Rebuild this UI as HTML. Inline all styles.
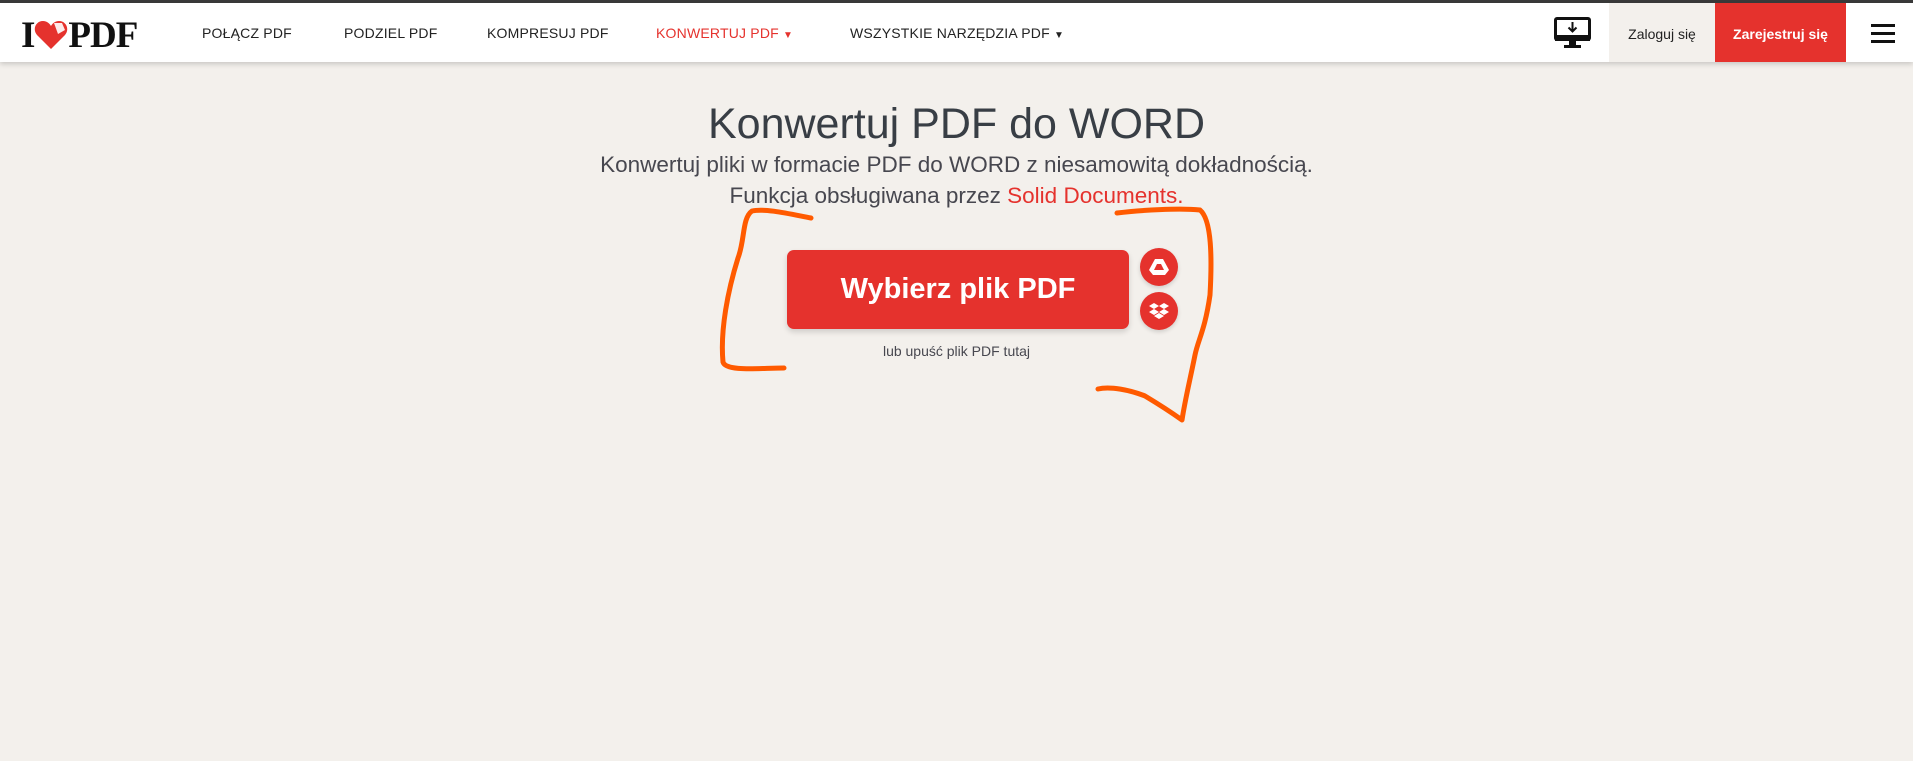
<!DOCTYPE html>
<html><head><meta charset="utf-8"><style>
*{margin:0;padding:0;box-sizing:border-box}
body{width:1913px;height:761px;background:#f3f0ec;font-family:"Liberation Sans",sans-serif;position:relative;overflow:hidden;color:#383e45}
.top{position:absolute;left:0;top:0;width:1913px;height:3px;background:#3a3a3a}
.hdr{position:absolute;left:0;top:3px;width:1913px;height:59px;background:#fff;box-shadow:0 2px 5px rgba(0,0,0,.18)}
.nav{position:absolute;top:33px;font-size:14px;color:#222;transform:translateY(-50%);letter-spacing:.2px}
.logo{position:absolute;left:21px;top:14px;font-family:"Liberation Serif",serif;font-weight:bold;font-size:37px;color:#111;letter-spacing:-1px}
.abs{position:absolute}
</style></head><body>
<div class="top"></div>
<div class="hdr"></div>
<div class="logo">I<span style="display:inline-block;width:34px"></span>PDF</div>
<svg class="abs" style="left:34px;top:20px" width="34" height="30" viewBox="0 0 34 30"><path d="M17 29 L3 15 C-2 9 2 1 9 1 C13 1 16 4 17 6 C18 4 21 1 25 1 C32 1 36 9 31 15 Z" fill="#e5322d"/><path d="M20 3 L28 3 L31 10 L24 14 Z" fill="#fff" opacity=".9"/></svg>
<div class="nav" style="left:202px">POŁĄCZ PDF</div>
<div class="nav" style="left:344px">PODZIEL PDF</div>
<div class="nav" style="left:487px">KOMPRESUJ PDF</div>
<div class="nav" style="left:656px;color:#e5322d">KONWERTUJ PDF <span style="font-size:10px">▼</span></div>
<div class="nav" style="left:850px">WSZYSTKIE NARZĘDZIA PDF <span style="font-size:10px">▼</span></div>
<svg class="abs" style="left:1554px;top:17px" width="37" height="32" viewBox="0 0 37 32"><rect x="1.5" y="1.5" width="34" height="21" rx="1.5" fill="#fff" stroke="#111" stroke-width="3"/><rect x="1" y="18" width="35" height="6" fill="#111"/><rect x="15" y="24" width="7" height="5" fill="#111"/><rect x="10" y="28" width="17" height="3" fill="#111"/><path d="M18.5 5 V14 M14.5 10.5 L18.5 14.5 L22.5 10.5" stroke="#111" stroke-width="2" fill="none"/></svg>
<div class="abs" style="left:1609px;top:3px;width:106px;height:59px;background:#f3f0ec;font-size:14px;color:#222;text-align:center;line-height:62px">Zaloguj się</div>
<div class="abs" style="left:1715px;top:3px;width:131px;height:59px;background:#e5322d;font-size:14px;color:#fff;font-weight:bold;text-align:center;line-height:62px">Zarejestruj się</div>
<div class="abs" style="left:1871px;top:24px;width:24px;height:3px;background:#111"></div>
<div class="abs" style="left:1871px;top:32px;width:24px;height:3px;background:#111"></div>
<div class="abs" style="left:1871px;top:40px;width:24px;height:3px;background:#111"></div>
<div class="abs" style="left:0;width:1913px;top:100px;text-align:center;font-size:43px;color:#383e45">Konwertuj PDF do WORD</div>
<div class="abs" style="left:0;width:1913px;top:152px;text-align:center;font-size:22.5px;color:#47474f">Konwertuj pliki w formacie PDF do WORD z niesamowitą dokładnością.</div>
<div class="abs" style="left:0;width:1913px;top:183px;text-align:center;font-size:22.5px;color:#47474f">Funkcja obsługiwana przez <span style="color:#e5322d">Solid Documents.</span></div>
<div class="abs" style="left:787px;top:250px;width:342px;height:79px;background:#e5322d;border-radius:7px;box-shadow:0 3px 6px rgba(0,0,0,.15);color:#fff;font-weight:bold;font-size:29px;text-align:center;line-height:79px">Wybierz plik PDF</div>
<div class="abs" style="left:1140px;top:248px;width:38px;height:38px;border-radius:50%;background:#e5322d;box-shadow:0 2px 4px rgba(0,0,0,.15)"></div>
<svg class="abs" style="left:1148px;top:258px" width="22" height="18" viewBox="0 0 22 18"><path d="M7 1 H15 L21 12 L17 17 H5 L1 12 Z" fill="#fff"/><path d="M9 6 L13 6 L16 12 L6 12 Z" fill="#e5322d"/></svg>
<div class="abs" style="left:1140px;top:292px;width:38px;height:38px;border-radius:50%;background:#e5322d;box-shadow:0 2px 4px rgba(0,0,0,.15)"></div>
<svg class="abs" style="left:1149px;top:301px" width="20" height="20" viewBox="0 0 20 20"><path d="M5 2 L10 5 L5 8 L0 5Z M15 2 L20 5 L15 8 L10 5Z M5 8 L10 11 L5 14 L0 11Z M15 8 L20 11 L15 14 L10 11Z M5 15 L10 18 L15 15 L10 12Z" fill="#fff"/></svg>
<div class="abs" style="left:0;width:1913px;top:343px;text-align:center;font-size:14px;color:#47474f">lub upuść plik PDF tutaj</div>
<svg class="abs" style="left:0;top:0" width="1913" height="761"><g fill="none" stroke="#ff5a00" stroke-width="5" stroke-linecap="round" stroke-linejoin="round"><path d="M811 218 C790 214 765 208 752 211 C742 218 745 240 738 258 C728 290 720 330 723 362 C726 372 760 368 784 368"/><path d="M1117 213 C1140 210 1180 208 1200 210 C1212 220 1212 260 1210 295 C1205 330 1198 340 1195 355 C1190 380 1185 400 1182 420 C1175 415 1160 405 1145 396 C1130 390 1110 386 1098 389"/></g></svg>
</body></html>
